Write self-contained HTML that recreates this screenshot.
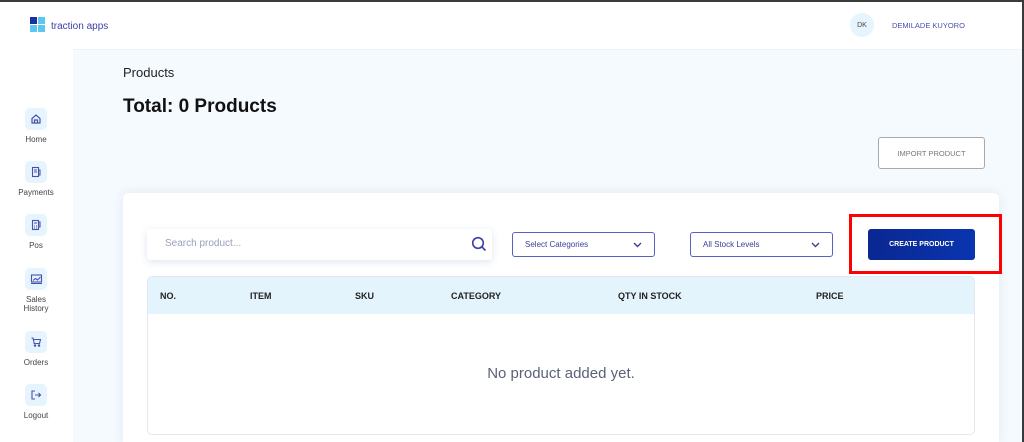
<!DOCTYPE html>
<html style="width:1024px;height:442px;overflow:hidden"><head><meta charset="utf-8"><style>
*{box-sizing:border-box;margin:0;padding:0}
body{width:1024px;height:442px;overflow:hidden;background:#fff;font-family:"Liberation Sans",sans-serif;position:relative}
.abs{position:absolute}
.frame{position:absolute;inset:0;border-top:2px solid #3a3a3a;border-right:2px solid #3a3a3a;pointer-events:none;z-index:10}
.main{left:73px;top:49px;right:0;bottom:0;background:#f5fafe;border-top:1px solid #eef2f5}
.nav{width:72px;text-align:center;font-size:8px;color:#444}
.ic{width:22px;height:22px;border-radius:5px;background:#e6f4fd;margin:0 auto 5px;display:flex;align-items:center;justify-content:center}
.card{left:123px;top:193px;width:876px;height:249px;background:#fff;border-radius:6px 6px 0 0;box-shadow:0 0 10px rgba(200,220,235,.5)}
.sel{height:25px;width:143px;border:1px solid #5a5fc0;border-radius:3px;font-size:8px;color:#3a3f9a;padding:0 12px;display:flex;align-items:center;justify-content:space-between;background:#fff}
.th{font-size:9px;font-weight:bold;color:#222;top:291px}
</style></head><body>
<div class="frame"></div>
<div class="abs" style="left:30px;top:17px;width:7px;height:7px;background:#1b2fa0"></div>
<div class="abs" style="left:38px;top:17px;width:7px;height:7px;background:#5dc6ef"></div>
<div class="abs" style="left:30px;top:25px;width:7px;height:7px;background:#5dc6ef"></div>
<div class="abs" style="left:38px;top:25px;width:7px;height:7px;background:#5dc6ef"></div>
<div class="abs" style="left:51px;top:21px;font-size:10px;color:#3b40a8">traction apps</div>
<div class="abs" style="left:850px;top:13px;width:24px;height:24px;border-radius:50%;background:#e6f4fd;font-size:7px;color:#444;display:flex;align-items:center;justify-content:center">DK</div>
<div class="abs" style="left:892px;top:21px;font-size:7.5px;color:#4a4fb0">DEMILADE KUYORO</div>
<div class="abs main"></div>
<div class="abs nav" style="left:0;top:108px"><div class="ic"><svg width="12" height="12" viewBox="0 0 12 12" fill="none" stroke="#4a4fb0" stroke-width="1.2"><path d="M2 5.5L6 2l4 3.5V10H2z M4.5 10V7h3v3"/></svg></div>Home</div>
<div class="abs nav" style="left:0;top:161px"><div class="ic"><svg width="12" height="12" viewBox="0 0 12 12" fill="none" stroke="#4a4fb0" stroke-width="1.1"><rect x="2.5" y="1.5" width="6" height="9"/><path d="M8.5 4h1.5v5h-1.5M4 4h3M4 6h3"/></svg></div>Payments</div>
<div class="abs nav" style="left:0;top:214px"><div class="ic"><svg width="12" height="12" viewBox="0 0 12 12" fill="none" stroke="#4a4fb0" stroke-width="1.1"><rect x="2.5" y="1.5" width="6" height="9"/><path d="M8.5 3h1.5v5h-1.5M4 4h3M4 7h1M6 7h1M4 9h1M6 9h1"/></svg></div>Pos</div>
<div class="abs nav" style="left:0;top:268px"><div class="ic"><svg width="13" height="12" viewBox="0 0 13 12" fill="none" stroke="#4a4fb0" stroke-width="1.1"><rect x="1.5" y="2" width="10" height="7"/><path d="M1 10.5h11M3 7.5l2.5-2 2 1.5 3-3"/></svg></div>Sales<br>History</div>
<div class="abs nav" style="left:0;top:331px"><div class="ic"><svg width="12" height="12" viewBox="0 0 12 12" fill="none" stroke="#4a4fb0" stroke-width="1.1"><path d="M1.5 2h1.5l1.2 5.5h5.3l1-4H3.5"/><circle cx="5" cy="9.5" r=".7"/><circle cx="9" cy="9.5" r=".7"/></svg></div>Orders</div>
<div class="abs nav" style="left:0;top:384px"><div class="ic"><svg width="12" height="12" viewBox="0 0 12 12" fill="none" stroke="#4a4fb0" stroke-width="1.1"><path d="M5 2H2v8h3M5 6h5.5M8.5 4l2 2-2 2"/></svg></div>Logout</div>
<div class="abs" style="left:123px;top:65px;font-size:13px;color:#222">Products</div>
<div class="abs" style="left:123px;top:96px;font-size:19px;font-weight:bold;color:#111">Total: 0 Products</div>
<div class="abs" style="left:878px;top:137px;width:107px;height:32px;border:1px solid #aaa;border-radius:3px;background:#fff;font-size:7.5px;color:#777;display:flex;align-items:center;justify-content:center">IMPORT PRODUCT</div>
<div class="abs card"></div>
<div class="abs" style="left:147px;top:229px;width:345px;height:31px;background:#fff;border-radius:3px;box-shadow:0 2px 8px rgba(180,200,220,.45)"></div>
<div class="abs" style="left:165px;top:238px;font-size:10px;color:#9aa0b8">Search product...</div>
<svg class="abs" style="left:471px;top:236px" width="16" height="16" viewBox="0 0 16 16" fill="none" stroke="#3b40a8" stroke-width="1.6"><circle cx="7" cy="7" r="5.3"/><path d="M11 11l3.5 3.5"/></svg>
<div class="abs sel" style="left:512px;top:232px">Select Categories<svg width="9" height="6" viewBox="0 0 9 6" fill="none" stroke="#3a3f9a" stroke-width="1.4"><path d="M1 1l3.5 3.5L8 1"/></svg></div>
<div class="abs sel" style="left:690px;top:232px">All Stock Levels<svg width="9" height="6" viewBox="0 0 9 6" fill="none" stroke="#3a3f9a" stroke-width="1.4"><path d="M1 1l3.5 3.5L8 1"/></svg></div>
<div class="abs" style="left:849px;top:214px;width:153px;height:60px;border:3px solid #f00"></div>
<div class="abs" style="left:868px;top:229px;width:107px;height:31px;background:linear-gradient(90deg,#0a2790,#0a35b0);border-radius:3px;font-size:7px;font-weight:bold;color:#fff;display:flex;align-items:center;justify-content:center">CREATE PRODUCT</div>
<div class="abs" style="left:147px;top:276px;width:828px;height:159px;border:1px solid #e2e8ee;border-radius:5px;background:#fff;overflow:hidden"><div style="height:37px;background:#e3f4fd"></div></div>
<div class="abs th" style="left:160px">NO.</div>
<div class="abs th" style="left:250px">ITEM</div>
<div class="abs th" style="left:355px">SKU</div>
<div class="abs th" style="left:451px">CATEGORY</div>
<div class="abs th" style="left:618px">QTY IN STOCK</div>
<div class="abs th" style="left:816px">PRICE</div>
<div class="abs" style="left:147px;width:828px;top:365px;text-align:center;font-size:15px;color:#5a6278">No product added yet.</div>
</body></html>
